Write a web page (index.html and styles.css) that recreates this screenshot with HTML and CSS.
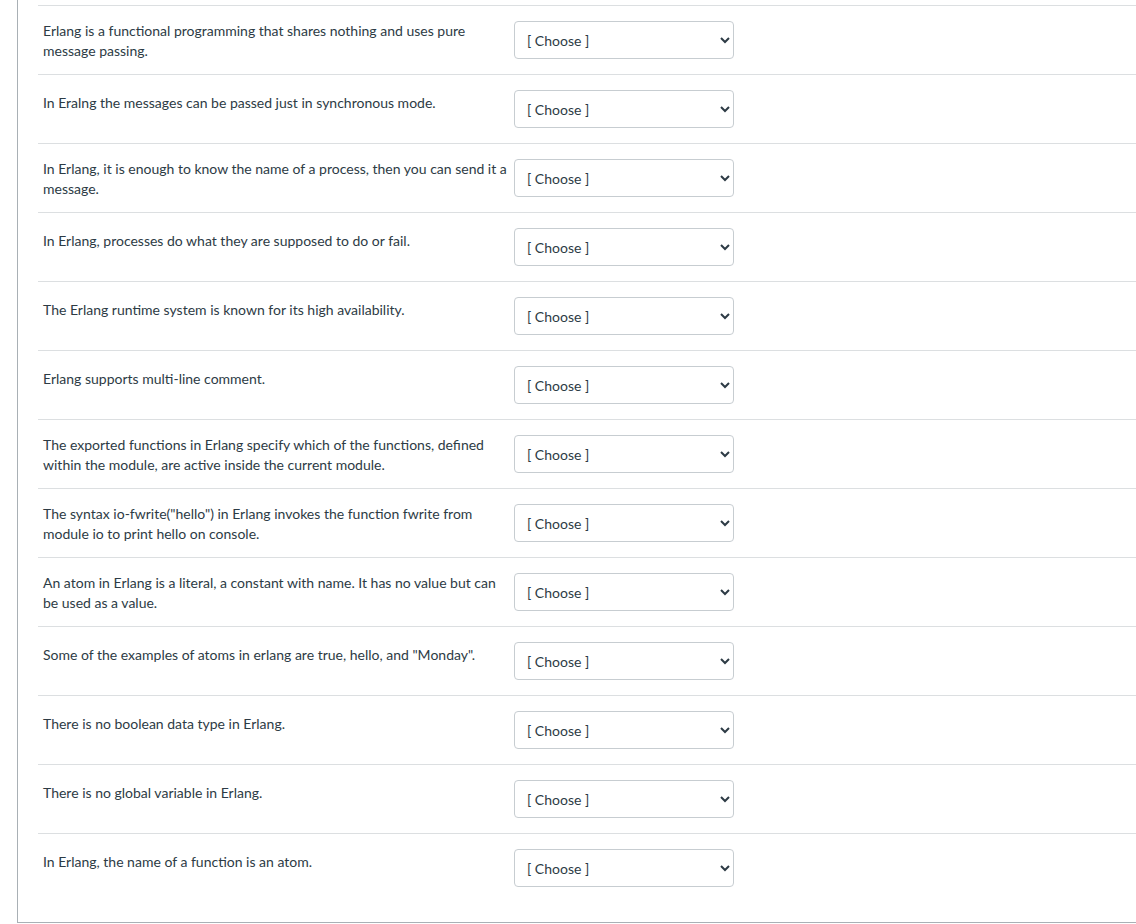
FILE: index.html
```html
<!DOCTYPE html>
<html lang="en">

<head>
  <meta charset="UTF-8">
  <title>Quiz - Erlang</title>
  <link rel="stylesheet" href="styles.css">
</head>

<body>
  <div class="question">
    <div class="answers">
      <div class="answer">
        <div class="match-left two-line">Erlang is a functional programming that shares nothing and uses pure message passing.</div>
        <select class="match-select"><option>[ Choose ]</option><option>True</option><option>False</option></select>
      </div>
      <div class="answer">
        <div class="match-left">In Eralng the messages can be passed just in synchronous mode.</div>
        <select class="match-select"><option>[ Choose ]</option><option>True</option><option>False</option></select>
      </div>
      <div class="answer">
        <div class="match-left two-line">In Erlang, it is enough to know the name of a process, then you can send it a message.</div>
        <select class="match-select"><option>[ Choose ]</option><option>True</option><option>False</option></select>
      </div>
      <div class="answer">
        <div class="match-left">In Erlang, processes do what they are supposed to do or fail.</div>
        <select class="match-select"><option>[ Choose ]</option><option>True</option><option>False</option></select>
      </div>
      <div class="answer">
        <div class="match-left">The Erlang runtime system is known for its high availability.</div>
        <select class="match-select"><option>[ Choose ]</option><option>True</option><option>False</option></select>
      </div>
      <div class="answer">
        <div class="match-left">Erlang supports multi-line comment.</div>
        <select class="match-select"><option>[ Choose ]</option><option>True</option><option>False</option></select>
      </div>
      <div class="answer">
        <div class="match-left two-line">The exported functions in Erlang specify which of the functions, defined within the module, are active inside the current module.</div>
        <select class="match-select"><option>[ Choose ]</option><option>True</option><option>False</option></select>
      </div>
      <div class="answer">
        <div class="match-left two-line">The syntax io-fwrite("hello") in Erlang invokes the function fwrite from module io to print hello on console.</div>
        <select class="match-select"><option>[ Choose ]</option><option>True</option><option>False</option></select>
      </div>
      <div class="answer">
        <div class="match-left two-line">An atom in Erlang is a literal, a constant with name. It has no value but can be used as a value.</div>
        <select class="match-select"><option>[ Choose ]</option><option>True</option><option>False</option></select>
      </div>
      <div class="answer">
        <div class="match-left">Some of the examples of atoms in erlang are true, hello, and "Monday".</div>
        <select class="match-select"><option>[ Choose ]</option><option>True</option><option>False</option></select>
      </div>
      <div class="answer">
        <div class="match-left">There is no boolean data type in Erlang.</div>
        <select class="match-select"><option>[ Choose ]</option><option>True</option><option>False</option></select>
      </div>
      <div class="answer">
        <div class="match-left">There is no global variable in Erlang.</div>
        <select class="match-select"><option>[ Choose ]</option><option>True</option><option>False</option></select>
      </div>
      <div class="answer">
        <div class="match-left">In Erlang, the name of a function is an atom.</div>
        <select class="match-select"><option>[ Choose ]</option><option>True</option><option>False</option></select>
      </div>
    </div>
  </div>
</body>

</html>
```

FILE: styles.css
```css
:root {
  --text-color: #2d3b45;
  --divider: #dcdfe1;
  --frame: #a9b0b5;
  --select-border: #c7cdd1;
}

* {
  box-sizing: border-box;
}

body {
  margin: 0;
  background: #fff;
  color: var(--text-color);
  font-family: Lato, 'Liberation Sans', sans-serif;
  font-size: 14px;
  line-height: 20px;
}

.question {
  margin-left: 17px;
  height: 923px;
  border-left: 1px solid var(--frame);
  border-bottom: 1px solid var(--frame);
  overflow: hidden;
}

.answers {
  padding: 5px 0 0 20px;
}

.answer {
  display: flex;
  align-items: flex-start;
  height: 69px;
  border-top: 1px solid var(--divider);
}

.match-left {
  width: 476px;
  flex-shrink: 0;
  padding: 18px 5px 0 5px;
}

/* two-line labels sit a little higher in the row */
.match-left.two-line {
  padding-top: 15px;
}

.match-select {
  width: 220px;
  height: 38px;
  margin-top: 15px;
  padding: 0 8px;
  border: 1px solid var(--select-border);
  border-radius: 4px;
  background: #fff;
  color: var(--text-color);
  font-family: Lato, 'Liberation Sans', sans-serif;
  font-size: 14px;
}
```
